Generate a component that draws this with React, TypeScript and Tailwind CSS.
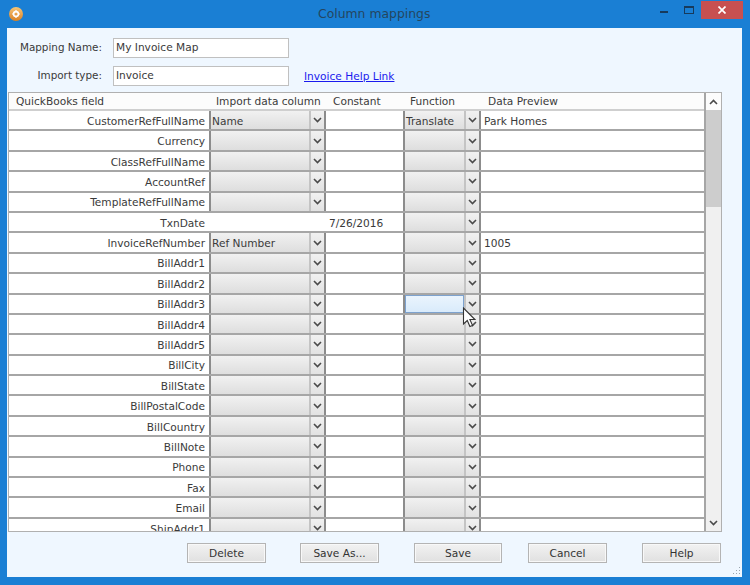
const rows: [string, string | null, string, string, string][] = [
  ["CustomerRefFullName", "Name", "", "Translate", "Park Homes"],
  ["Currency", "", "", "", ""],
  ["ClassRefFullName", "", "", "", ""],
  ["AccountRef", "", "", "", ""],
  ["TemplateRefFullName", "", "", "", ""],
  ["TxnDate", null, "7/26/2016", "", ""],
  ["InvoiceRefNumber", "Ref Number", "", "", "1005"],
  ["BillAddr1", "", "", "", ""],
  ["BillAddr2", "", "", "", ""],
  ["BillAddr3", "", "", "", ""],
  ["BillAddr4", "", "", "", ""],
  ["BillAddr5", "", "", "", ""],
  ["BillCity", "", "", "", ""],
  ["BillState", "", "", "", ""],
  ["BillPostalCode", "", "", "", ""],
  ["BillCountry", "", "", "", ""],
  ["BillNote", "", "", "", ""],
  ["Phone", "", "", "", ""],
  ["Fax", "", "", "", ""],
  ["Email", "", "", "", ""],
  ["ShipAddr1", "", "", "", ""],
];

function Chevron({ up = false }: { up?: boolean }) {
  return (
    <svg width="9" height="6" viewBox="0 0 9 6" className={up ? "rotate-180" : ""}>
      <path d="M1 1l3.5 3.5L8 1" fill="none" stroke="#4a4a4a" strokeWidth="1.6" />
    </svg>
  );
}

function Combo({ value, active = false }: { value: string; active?: boolean }) {
  return (
    <div className="flex h-full w-full border-x-2 border-x-[#8c8c8c]">
      <div
        className={
          active
            ? "flex flex-1 items-center border border-[#7da2ce] bg-gradient-to-b from-[#eaf4fd] to-[#d9ebfb] pl-px pt-[3px]"
            : "flex flex-1 items-center bg-gradient-to-b from-[#f1f1f1] to-[#dedede] pl-px pt-[3px]"
        }
      >
        {value}
      </div>
      <div className="flex w-[15px] shrink-0 items-center justify-center border-l-2 border-l-[#c4c4c4] bg-gradient-to-b from-[#f1f1f1] to-[#e2e2e2]">
        <Chevron />
      </div>
    </div>
  );
}

function Btn({ label, w }: { label: string; w: string }) {
  return (
    <button
      className={`h-[20px] ${w} border border-[#b4b4b4] bg-gradient-to-b from-[#f2f2f2] to-[#e0e0e0] pt-px text-[10.6px] text-[#333] shadow-[inset_0_0_0_1px_#f8f8f8]`}
    >
      {label}
    </button>
  );
}

export default function App() {
  return (
    <div
      className="relative flex h-[585px] w-[750px] flex-col overflow-hidden bg-[#1a7fd4] text-[10.6px] text-[#3a3a3a]"
      style={{ fontFamily: '"DejaVu Sans", Verdana, sans-serif' }}
    >
      {/* Title bar */}
      <div className="flex h-[28px] shrink-0 items-start">
        <div className="ml-[9px] mt-[7px] flex h-[14px] w-[14px] items-center justify-center rounded-full bg-gradient-to-b from-[#f7c675] to-[#d9801c]">
          <svg width="8" height="8" viewBox="0 0 8 8">
            <circle cx="4" cy="4" r="2.4" fill="none" stroke="#fff" strokeWidth="1.6" />
            <path d="M4 0v1.5M4 6.5V8M0 4h1.5M6.5 4H8" stroke="#fff" strokeWidth="1.2" />
          </svg>
        </div>
        <div className="ml-[295px] mt-[6px] text-[12.4px] leading-[16px] text-[#24465f]">Column mappings</div>
        <div className="ml-auto mr-[7px] flex items-start">
          <div className="mt-[11px] h-[2px] w-[8px] bg-[#173a5c]" />
          <div className="ml-[16px] mt-[6px] h-[8px] w-[10px] border border-t-2 border-[#173a5c]" />
          <div className="ml-[7px] mt-px flex h-[18px] w-[42px] items-center justify-center bg-[#c75050]">
            <svg width="8" height="8" viewBox="0 0 8 8">
              <path d="M.5.5l7 7M7.5.5l-7 7" stroke="#fff" strokeWidth="1.7" />
            </svg>
          </div>
        </div>
      </div>

      {/* Client area */}
      <div className="relative ml-[7px] mr-[8px] mb-[8px] flex min-h-0 flex-1 flex-col bg-[#eff7ff]">
        <div className="flex h-[64px] shrink-0 flex-col gap-[8px] pt-[10px]">
          <div className="flex items-center">
            <div className="w-[95px] text-right text-[10.4px]">Mapping Name:</div>
            <div className="ml-[11px] flex h-[20px] w-[176px] items-center border border-[#c0c0c0] bg-white pl-[2px]">My Invoice Map</div>
          </div>
          <div className="flex items-center">
            <div className="w-[95px] text-right text-[10.4px]">Import type:</div>
            <div className="ml-[11px] flex h-[20px] w-[176px] items-center border border-[#c0c0c0] bg-white pl-[2px]">Invoice</div>
            <a className="ml-[15px] mt-[2px] text-[#1a1aee] underline">Invoice Help Link</a>
          </div>
        </div>

        {/* Grid */}
        <div className="ml-px flex h-[440px] w-[714px] shrink-0 border border-[#b0b0b0]">
          <div className="flex min-w-0 flex-1 flex-col overflow-hidden">
            <div className="flex h-[18px] shrink-0 items-center border-b-2 border-b-[#cfcfcf] bg-[#fcfcfc] pt-[2px]">
              <div className="w-[200px] pl-[7px]">QuickBooks field</div>
              <div className="w-[117px] pl-[7px]">Import data column</div>
              <div className="w-[77px] pl-[7px]">Constant</div>
              <div className="w-[78px] pl-[7px]">Function</div>
              <div className="flex-1 pl-[7px]">Data Preview</div>
            </div>
            {rows.map((r, i) => (
              <div key={r[0]} className="flex h-[20.4px] shrink-0 border-b-2 border-b-[#a6a6a6] bg-white">
                <div className="flex w-[200px] items-center justify-end pr-[4px] pt-[3px]">{r[0]}</div>
                <div className="flex w-[117px] items-center">
                  {r[1] === null ? <div className="h-full w-full" /> : <Combo value={r[1]} />}
                </div>
                <div className="flex w-[77px] items-center pl-[3px] pt-[3px]">{r[2]}</div>
                <div className="flex w-[78px] items-center">
                  <Combo value={r[3]} active={i === 9} />
                </div>
                <div className="flex flex-1 items-center pl-[3px] pt-[3px]">{r[4]}</div>
              </div>
            ))}
          </div>
          {/* Scrollbar */}
          <div className="flex w-[17px] shrink-0 flex-col border-l-2 border-l-[#a6a6a6] bg-[#f0f0f0]">
            <div className="flex h-[17px] shrink-0 items-center justify-center bg-[#fcfcfc]">
              <Chevron up />
            </div>
            <div className="h-[97px] w-full shrink-0 bg-[#cdcdcd]" />
            <div className="flex-1" />
            <div className="flex h-[17px] shrink-0 items-center justify-center">
              <Chevron />
            </div>
          </div>
        </div>

        {/* Buttons */}
        <div className="flex flex-1 items-start pt-[11px]">
          <div className="ml-[180px]"><Btn label="Delete" w="w-[79px]" /></div>
          <div className="ml-[34px]"><Btn label="Save As..." w="w-[79px]" /></div>
          <div className="ml-[35px]"><Btn label="Save" w="w-[88px]" /></div>
          <div className="ml-[26px]"><Btn label="Cancel" w="w-[79px]" /></div>
          <div className="ml-[35px]"><Btn label="Help" w="w-[79px]" /></div>
        </div>
        <svg width="10" height="10" viewBox="0 0 10 10" className="absolute bottom-[1px] right-[1px]">
          <path d="M8 1h1v1H8zM8 4h1v1H8zM5 4h1v1H5zM8 7h1v1H8zM5 7h1v1H5zM2 7h1v1H2z" fill="#9aa5ae" />
        </svg>
      </div>

      {/* Mouse cursor */}
      <svg width="14" height="22" viewBox="0 0 14 22" className="absolute left-[462px] top-[307px]">
        <path d="M1.5 1v16l3.8-3.5 2.6 6 2.6-1.1-2.6-5.9h5z" fill="#fff" stroke="#333" strokeWidth="1.1" />
      </svg>
    </div>
  );
}
